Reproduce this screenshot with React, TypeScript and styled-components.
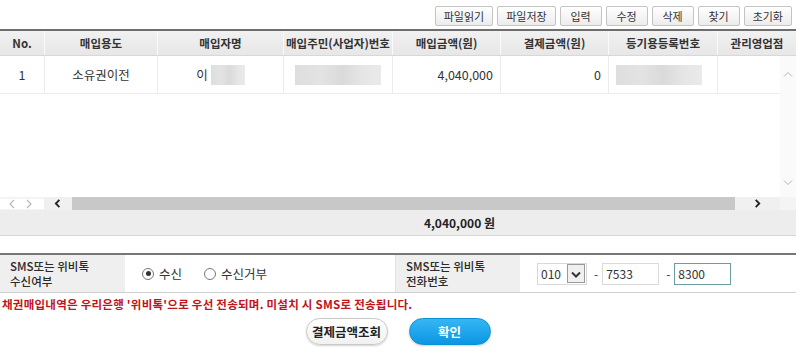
import * as React from "react";
import styled, { createGlobalStyle } from "styled-components";

const GlobalStyle = createGlobalStyle`
  html, body { margin: 0; padding: 0; background: #fff; }
  body {
    font-family: "Noto Sans CJK KR", "Noto Sans", "Liberation Sans", sans-serif;
    color: #333;
  }
`;

const COLS = "44px 113px 126px 109px 108px 108px 109px 1fr";

const Page = styled.div`
  width: 796px;
  height: 358px;
  overflow: hidden;
`;

const Toolbar = styled.div`
  display: flex;
  justify-content: flex-end;
  gap: 4px;
  padding: 6px 4px 0 0;
  height: 23px;
`;

const ToolButton = styled.button`
  height: 20px;
  min-width: 42px;
  padding: 0 8px;
  border: 1px solid #c4c4c4;
  border-radius: 2px;
  background: linear-gradient(#ffffff, #ececec);
  font-family: inherit;
  font-size: 11px;
  color: #333;
  line-height: 18px;
`;

const Grid = styled.div`
  border-top: 2px solid #6e6e6e;
`;

const HeadRow = styled.div`
  display: grid;
  grid-template-columns: ${COLS};
  height: 24px;
  background: linear-gradient(#f1f1f1, #e7e7e7);
  border-bottom: 1px solid #d8d8d8;
`;

const HeadCell = styled.div`
  display: flex;
  align-items: center;
  justify-content: center;
  font-size: 11.5px;
  font-weight: 700;
  color: #333;
  border-left: 1px solid #fafafa;
  &:first-child { border-left: none; }
`;

const BodyArea = styled.div`
  display: flex;
  height: 141px;
`;

const Rows = styled.div`
  flex: 1;
`;

const DataRow = styled.div`
  display: grid;
  grid-template-columns: ${COLS};
  height: 37px;
  border-bottom: 1px solid #ececec;
`;

const Cell = styled.div<{ $align?: string }>`
  display: flex;
  align-items: center;
  justify-content: ${p => p.$align || "center"};
  padding: 0 7px;
  font-size: 12.5px;
  color: #333;
  border-left: 1px solid #ececec;
  &:first-child { border-left: none; }
`;

const Masked = styled.span<{ $w: number }>`
  display: inline-block;
  width: ${p => p.$w}px;
  height: 20px;
  background: linear-gradient(90deg, #dedede 0%, #e3e3e3 30%, #dadada 55%, #e6e6e6 80%, #eaeaea 100%);
`;

const VScroll = styled.div`
  width: 16px;
  background: #fafafa;
  display: flex;
  flex-direction: column;
  justify-content: space-between;
  align-items: center;
  padding: 14px 0 10px;
  color: #b5b5b5;
`;

const HScroll = styled.div`
  display: flex;
  align-items: center;
  height: 13px;
  background: #f4f4f4;
`;

const PageArrows = styled.div`
  width: 44px;
  display: flex;
  gap: 6px;
  padding-left: 8px;
  box-sizing: border-box;
  color: #b8b8b8;
  background: #fff;
`;

const ScrollBtn = styled.div<{ $w: number }>`
  width: ${p => p.$w}px;
  height: 13px;
  display: flex;
  align-items: center;
  justify-content: center;
  background: #f0f0f0;
  color: #222;
`;

const Thumb = styled.div`
  width: 663px;
  height: 13px;
  background: #c8c8c8;
`;

const TotalRow = styled.div`
  display: grid;
  grid-template-columns: ${COLS};
  height: 25px;
  background: #ededed;
  border-bottom: 1px solid #d4d4d4;
`;

const TotalCell = styled.div`
  grid-column: 5;
  display: flex;
  align-items: center;
  justify-content: flex-end;
  padding-right: 5px;
  font-size: 12px;
  font-weight: 700;
  color: #222;
  white-space: nowrap;
`;

const SmsTable = styled.div`
  margin-top: 17px;
  display: grid;
  grid-template-columns: 125px 270px 125px 1fr;
  height: 37px;
  border-top: 2px solid #777;
  border-bottom: 1px solid #cfcfcf;
`;

const Label = styled.div`
  background: #efefef;
  display: flex;
  flex-direction: column;
  justify-content: center;
  padding-left: 10px;
  font-size: 11.5px;
  font-weight: 500;
  line-height: 15px;
  color: #2a2a2a;
  border-left: 1px solid #e2e2e2;
  &:first-child { border-left: none; }
`;

const Value = styled.div`
  display: flex;
  align-items: center;
  padding-left: 17px;
  font-size: 12.5px;
  color: #333;
`;

const RadioItem = styled.label`
  display: flex;
  align-items: center;
  gap: 5px;
  margin-right: 22px;
`;

const RadioDot = styled.span<{ $on?: boolean }>`
  width: 10px;
  height: 10px;
  border-radius: 50%;
  border: 1px solid #777;
  display: flex;
  align-items: center;
  justify-content: center;
  background: #fff;
  &::after {
    content: "";
    width: 5px;
    height: 5px;
    border-radius: 50%;
    background: ${p => (p.$on ? "#333" : "transparent")};
  }
`;

const Select = styled.div`
  width: 45px;
  height: 20px;
  border: 1px solid #d8d8d8;
  display: flex;
  align-items: center;
  justify-content: space-between;
  padding-left: 3px;
  font-size: 12px;
  color: #333;
`;

const SelectArrow = styled.span`
  width: 16px;
  height: 17px;
  border: 1px solid #999;
  background: #f0f0f0;
  display: flex;
  align-items: center;
  justify-content: center;
  margin-right: 1px;
`;

const Dash = styled.span`
  margin: 0 4px 0 7px;
  font-size: 12px;
`;

const TextInput = styled.div<{ $focus?: boolean }>`
  width: 52px;
  height: 20px;
  border: 1px solid ${p => (p.$focus ? "#6a9ea2" : "#dadada")};
  display: flex;
  align-items: center;
  padding-left: 3px;
  font-size: 12px;
  color: #333;
`;

const Notice = styled.p`
  margin: 3px 0 0 2px;
  font-size: 11.5px;
  font-weight: 700;
  color: #c0141c;
  letter-spacing: 0.25px;
  white-space: nowrap;
`;

const Actions = styled.div`
  display: flex;
  justify-content: center;
  gap: 21px;
  margin-top: 6px;
`;

const PillButton = styled.button<{ $primary?: boolean }>`
  width: 82px;
  height: 27px;
  padding: 0;
  white-space: nowrap;
  border-radius: 14px;
  font-family: inherit;
  font-size: 12.5px;
  font-weight: 700;
  color: ${p => (p.$primary ? "#fff" : "#222")};
  border: 1px solid ${p => (p.$primary ? "#0d8fd6" : "#c8c8c8")};
  background: ${p =>
    p.$primary ? "linear-gradient(#35b6f5, #0c96e2)" : "linear-gradient(#ffffff, #f1f1f1)"};
  box-shadow: 0 1px 2px rgba(0, 0, 0, 0.18);
`;

const Chevron = ({ dir, size = 9, w = 1.4 }: { dir: "l" | "r" | "u" | "d"; size?: number; w?: number }) => {
  const d = {
    l: "M6 1 L2 5 L6 9",
    r: "M3 1 L7 5 L3 9",
    u: "M1 6.5 L5 2.5 L9 6.5",
    d: "M1 3.5 L5 7.5 L9 3.5",
  }[dir];
  return (
    <svg width={size} height={size} viewBox="0 0 10 10">
      <path d={d} fill="none" stroke="currentColor" strokeWidth={w} />
    </svg>
  );
};

const tools = ["파일읽기", "파일저장", "입력", "수정", "삭제", "찾기", "초기화"];
const heads = ["No.", "매입용도", "매입자명", "매입주민(사업자)번호", "매입금액(원)", "결제금액(원)", "등기용등록번호", "관리영업점"];

export default function App() {
  return (
    <Page>
      <GlobalStyle />
      <Toolbar>
        {tools.map(t => (
          <ToolButton key={t}>{t}</ToolButton>
        ))}
      </Toolbar>
      <Grid>
        <HeadRow>
          {heads.map(h => (
            <HeadCell key={h}>{h}</HeadCell>
          ))}
        </HeadRow>
        <BodyArea>
          <Rows>
            <DataRow>
              <Cell>1</Cell>
              <Cell>소유권이전</Cell>
              <Cell>
                이&nbsp;<Masked $w={34} />
              </Cell>
              <Cell>
                <Masked $w={86} />
              </Cell>
              <Cell $align="flex-end">4,040,000</Cell>
              <Cell $align="flex-end">0</Cell>
              <Cell $align="flex-start">
                <Masked $w={86} />
              </Cell>
              <Cell />
            </DataRow>
          </Rows>
          <VScroll>
            <Chevron dir="u" size={10} w={1} />
            <Chevron dir="d" size={10} w={1} />
          </VScroll>
        </BodyArea>
        <HScroll>
          <PageArrows>
            <Chevron dir="l" size={10} w={1.2} />
            <Chevron dir="r" size={10} w={1.2} />
          </PageArrows>
          <ScrollBtn $w={28}>
            <Chevron dir="l" size={9} w={2} />
          </ScrollBtn>
          <Thumb />
          <ScrollBtn $w={45}>
            <Chevron dir="r" size={9} w={2} />
          </ScrollBtn>
        </HScroll>
        <TotalRow>
          <TotalCell>4,040,000 원</TotalCell>
        </TotalRow>
      </Grid>

      <SmsTable>
        <Label>
          <span>SMS또는 위비톡</span>
          <span>수신여부</span>
        </Label>
        <Value>
          <RadioItem>
            <RadioDot $on />
            수신
          </RadioItem>
          <RadioItem>
            <RadioDot />
            수신거부
          </RadioItem>
        </Value>
        <Label>
          <span>SMS또는 위비톡</span>
          <span>전화번호</span>
        </Label>
        <Value>
          <Select>
            010
            <SelectArrow>
              <Chevron dir="d" size={10} w={2} />
            </SelectArrow>
          </Select>
          <Dash>-</Dash>
          <TextInput>7533</TextInput>
          <Dash>-</Dash>
          <TextInput $focus>8300</TextInput>
        </Value>
      </SmsTable>

      <Notice>채권매입내역은 우리은행 '위비톡'으로 우선 전송되며. 미설치 시 SMS로 전송됩니다.</Notice>

      <Actions>
        <PillButton>결제금액조회</PillButton>
        <PillButton $primary>확인</PillButton>
      </Actions>
    </Page>
  );
}
